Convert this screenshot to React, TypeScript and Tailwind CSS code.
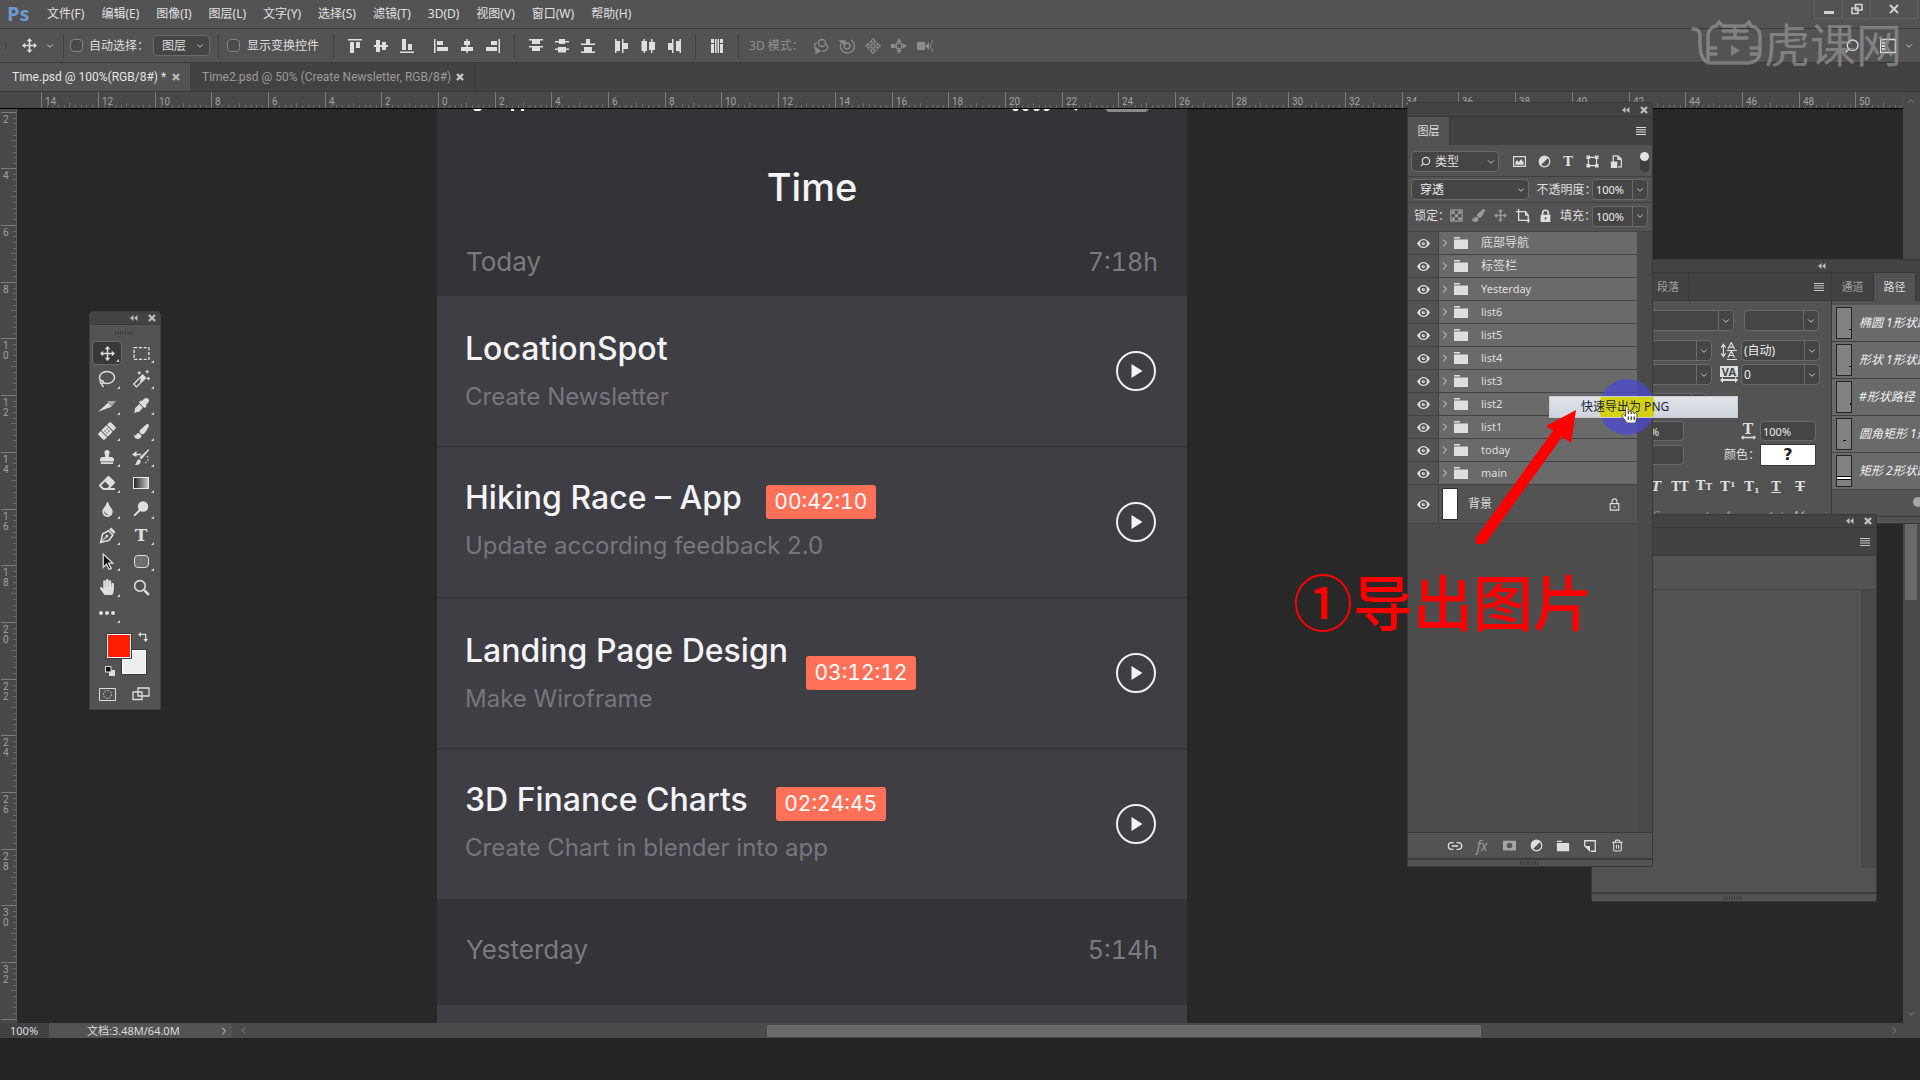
import type { ReactNode } from 'react';
import { ChevronDown, ChevronLeft, ChevronRight, ChevronUp, Lasso, Link2, Search, Trash2 } from 'lucide-react';
import {
  FaBandAid,
  FaEraser,
  FaEyeDropper,
  FaHandPaper,
  FaHandPointer,
  FaPaintBrush,
  FaStamp,
  FaTint,
} from 'react-icons/fa';

const MENUS = ['文件(F)', '编辑(E)', '图像(I)', '图层(L)', '文字(Y)', '选择(S)', '滤镜(T)', '3D(D)', '视图(V)', '窗口(W)', '帮助(H)'];

const LAYERS = ['底部导航', '标签栏', 'Yesterday', 'list6', 'list5', 'list4', 'list3', 'list2', 'list1', 'today', 'main'];

const PATHS = [
  { name: '椭圆 1形状路径', mark: 'right-0 top-[21px] h-px w-0.5 bg-black' },
  { name: '形状 1形状路径', mark: 'right-0 top-[21px] h-px w-0.5 bg-black' },
  { name: '#形状路径', mark: 'right-0 top-[21px] h-0.5 w-px bg-black' },
  { name: '圆角矩形 1形状路径', mark: 'right-[5px] top-[21px] h-px w-[3px] bg-black' },
  { name: '矩形 2形状路径', mark: 'left-0 top-5 h-1 w-full border-y border-black bg-white' },
];

interface Task {
  title: string;
  note: string;
  timer?: string;
  pad: string;
  badge?: string;
}

const TASKS: Task[] = [
  { title: 'LocationSpot', note: 'Create Newsletter', pad: 'pt-8' },
  { title: 'Hiking Race – App', note: 'Update according feedback 2.0', timer: '00:42:10', pad: 'pt-[30px]', badge: 'ml-6 mt-2' },
  { title: 'Landing Page Design', note: 'Make Wiroframe', timer: '03:12:12', pad: 'pt-8', badge: 'ml-[18px] mt-[26px]' },
  { title: '3D Finance Charts', note: 'Create Chart in blender into app', timer: '02:24:45', pad: 'pt-[30px]', badge: 'ml-7 mt-2' },
];

// two centimetres at 72 dpi
const RULER_STEP = 56.693;

/* ---------- small drawings ---------- */

function Glyph({ size = 16, box = 16, className = '', children }: { size?: number; box?: number; className?: string; children: ReactNode }) {
  return (
    <svg width={size} height={size} viewBox={`0 0 ${box} ${box}`} className={`shrink-0 ${className}`} fill="currentColor" aria-hidden="true">
      {children}
    </svg>
  );
}

const MoveShape = (
  <path d="M8 0l3 3.4H8.8v3.8h3.8V5L16 8l-3.4 3V8.8H8.8v3.8H11L8 16l-3-3.4h2.2V8.8H3.4V11L0 8l3.4-3v2.2h3.8V3.4H5z" />
);

const AdjustShape = (
  <>
    <circle cx="8" cy="8" r="6.5" fill="none" stroke="currentColor" strokeWidth="1.5" />
    <path d="M3.4 12.6A6.5 6.5 0 0 1 12.6 3.4z" />
  </>
);

const FolderShape = <path d="M1 2h6v1.5H1zM1 4.5h14V14H1z" />;

function CloseMark() {
  return (
    <Glyph size={8} box={8}>
      <path d="M1 1l6 6M7 1L1 7" stroke="currentColor" strokeWidth="2.400" />
    </Glyph>
  );
}

function CollapseMark() {
  return (
    <Glyph size={8} box={8}>
      <path d="M3.500 1v6L0 4zM7.500 1v6L4 4z" />
    </Glyph>
  );
}

function MenuLines() {
  return (
    <Glyph size={10} box={10}>
      <path d="M0 1h10v1H0zM0 3.300h10v1H0zM0 5.600h10v1H0zM0 8h10v1H0z" />
    </Glyph>
  );
}

function Grip({ className = '' }: { className?: string }) {
  return (
    <svg width="20" height="4" viewBox="0 0 20 4" className={`text-[#3a3a3a] ${className}`} aria-hidden="true">
      <path d="M0.5 0v4M3 0v4M5.500 0v4M8 0v4M10.500 0v4M13 0v4M15.500 0v4M18 0v4" stroke="currentColor" />
    </svg>
  );
}

/* ---------- menu bar, options bar, tabs ---------- */

function MenuBar() {
  return (
    <header className="flex h-[29px] shrink-0 items-center border-b border-[#3a3a3a] pl-[7px]">
      <span className="w-[34px] font-['Open_Sans'] text-[20px] font-bold leading-6 text-[#6d9ad0]">Ps</span>
      <nav className="flex grow gap-[17px] pl-1.5">
        {MENUS.map((menu) => (
          <button key={menu} className="whitespace-nowrap">{menu}</button>
        ))}
      </nav>
      <div className="mb-2.5 mr-0.5 flex h-[19px] border border-t-0 border-[#616161] text-[#d0d0d0]">
        <button aria-label="Minimize" className="flex w-7 items-end justify-center border-r border-[#616161] pb-1">
          <span className="h-[3px] w-2.5 bg-current" />
        </button>
        <button aria-label="Restore" className="flex w-7 items-center justify-center border-r border-[#616161]">
          <Glyph size={12} box={12}>
            <path d="M4.500 1.500h6.500v5.500h-6.500zM1 5h6v5.500H1z" fill="none" stroke="currentColor" strokeWidth="1.600" />
          </Glyph>
        </button>
        <button aria-label="Close" className="flex w-[46px] items-center justify-center">
          <Glyph size={10} box={10}>
            <path d="M1 1l8 8M9 1L1 9" stroke="currentColor" strokeWidth="2" />
          </Glyph>
        </button>
      </div>
    </header>
  );
}

function ToolGlyph({ label, d, className = '' }: { label: string; d: string; className?: string }) {
  return (
    <button aria-label={label} className={`flex w-[26px] justify-center ${className}`}>
      <Glyph size={14} box={14}>
        <path d={d} />
      </Glyph>
    </button>
  );
}

function Divider() {
  return <span className="h-6 w-px shrink-0 bg-[#414141]" />;
}

function OptionsBar() {
  return (
    <div className="flex h-[34px] shrink-0 items-center border-b border-[#3a3a3a] text-[#dedede]">
      <Grip className="ml-0.5 w-2 rotate-90" />
      <button aria-label="Move tool" className="ml-3 flex w-[41px] items-center gap-2">
        <Glyph size={15}>{MoveShape}</Glyph>
        <ChevronDown size={10} />
      </button>
      <Divider />
      <label className="ml-1.5 flex items-center gap-1.5">
        <input type="checkbox" className="size-[13px] appearance-none rounded-sm border border-[#858585] bg-[#4a4a4a]" />
        自动选择：
      </label>
      <div className="ml-1 flex h-[21px] w-[57px] items-center rounded-sm border border-[#6a6a6a] bg-[#454545] pl-2 pr-1">
        <select aria-label="自动选择" className="min-w-0 grow appearance-none bg-transparent">
          <option>图层</option>
        </select>
        <ChevronDown size={10} />
      </div>
      <span className="w-2" />
      <Divider />
      <label className="ml-2 mr-[14px] flex items-center gap-[7px]">
        <input type="checkbox" className="size-[13px] appearance-none rounded-sm border border-[#858585] bg-[#4a4a4a]" />
        显示变换控件
      </label>
      <Divider />
      <div className="ml-2 mr-2 flex">
        <ToolGlyph label="Align top" d="M0 0h14v1.500H0zM2 3h4v11H2zM8 3h4v6H8z" />
        <ToolGlyph label="Align middle" d="M2 1h4v5h2V3h4v3h2v2h-2v3H8V8H6v5H2V8H0V6h2z" />
        <ToolGlyph label="Align bottom" d="M0 12.500h14V14H0zM2 0h4v11H2zM8 5h4v6H8z" />
      </div>
      <div className="mr-2 flex">
        <ToolGlyph label="Align left" d="M0 0h1.500v14H0zM3 2h6v4H3zM3 8h11v4H3z" />
        <ToolGlyph label="Align centre" d="M6.300 0h1.500v2H10v4H7.800v2H13v4H7.800v2H6.300v-2H1V8h5.300V6H4V2h2.300z" />
        <ToolGlyph label="Align right" d="M12.500 0H14v14h-1.500zM5 2h6v4H5zM0 8h11v4H0z" />
      </div>
      <Divider />
      <div className="ml-2 mr-2 flex">
        <ToolGlyph label="Distribute top" d="M0 0h14v1.500h-3V5H3V1.500H0zM0 7h14v1.500h-3V12H3V8.500H0z" />
        <ToolGlyph label="Distribute middle" d="M4 0h6v2h4v1.500h-4V5H4V3.500H0V2h4zM3 8h8v1.500h3V11h-3v2.500H3V11H0V9.500h3z" />
        <ToolGlyph label="Distribute bottom" d="M5 0h4v4.500h5V6H0V4.500h5zM3 8h8v4.500h3V14H0v-1.500h3z" />
      </div>
      <div className="mr-2 flex">
        <ToolGlyph label="Distribute left" d="M0 0h1.500v2H5v10H1.500v2H0zM7 0h1.500v4H13v6H8.500v4H7z" />
        <ToolGlyph label="Distribute centre" d="M2.500 0H4v2h2v10H4v2H2.500v-2h-2V2h2zM10 0h1.500v3H14v8h-2.500v3H10v-3H8V3h2z" />
        <ToolGlyph label="Distribute right" d="M5 0h1.500v14H5v-3H1V4h4zM12.500 0H14v14h-1.500v-2H9V2h3.500z" />
      </div>
      <Divider />
      <ToolGlyph label="Auto align" className="mx-2" d="M1 0h3v4H1zM1 5h3v9H1zM5 0h1.500v14H5zM7.500 0H9v14H7.500zM10 0h3v4h-3zM10 5h3v9h-3z" />
      <Divider />
      <span className="ml-2.5 text-[#909090]">3D 模式：</span>
      <div className="ml-1 flex text-[#8c8c8c]">
        {[
          <g key="orbit" fill="none" stroke="currentColor" strokeWidth="1.300"><circle cx="9" cy="5" r="3.500" /><path d="M4 4C0 7 1 12 5 11M12 5c5 3 2 9-3 8" /><path d="M3 10l4 3-4 2z" fill="currentColor" /></g>,
          <g key="roll" fill="none" stroke="currentColor" strokeWidth="1.300"><circle cx="8" cy="8" r="3" /><path d="M4 2.500A7 7 0 1 0 12 2" /><path d="M1 3h5v3z" fill="currentColor" /></g>,
          <g key="pan" fill="none" stroke="currentColor" strokeWidth="1.100"><path d="M8 .7l2.700 3H9v3.300h3.300V5.300l3 2.700-3 2.700V9H9v3.300h1.700L8 15.300l-2.700-3H7V9H3.700v1.700L.7 8l3-2.700V7H7V3.700H5.300z" /></g>,
          <g key="slide"><circle cx="8" cy="8" r="3" fill="none" stroke="currentColor" strokeWidth="1.500" /><path d="M8 0l2.500 4h-5zM8 16l2.500-4h-5zM0 6h4v4H0zM16 8l-4-2.500v5z" /></g>,
          <g key="zoom"><path d="M0 4h8v8H0zM8 8l4-4v8z" /><path d="M16 2l-3 6 3 6" fill="none" stroke="currentColor" /></g>,
        ].map((shape) => (
          <button key={shape.key} aria-label={`3D ${shape.key}`} className="flex w-[26px] justify-center">
            <Glyph>{shape}</Glyph>
          </button>
        ))}
      </div>
      <div className="ml-auto mr-1.5 flex items-center gap-2">
        <button aria-label="Search"><Search size={16} className="-scale-x-100" /></button>
        <button aria-label="Workspace" className="ml-3">
          <Glyph>
            <path d="M0.500 1.500h15v13h-15z" fill="none" stroke="currentColor" strokeWidth="1.500" />
            <path d="M2 4h3v2H2zM2 7h3v2H2zM2 10h3v2H2z" />
          </Glyph>
        </button>
        <ChevronDown size={10} />
      </div>
    </div>
  );
}

function DocumentTabs() {
  return (
    <div className="flex h-[29px] shrink-0 items-stretch whitespace-nowrap border-b border-[#383838] bg-[#424242] font-[Roboto] text-[#9b9b9b]">
      <div className="flex w-[190px] items-center justify-between bg-[#535353] pl-3 pr-2.5 text-[#e4e4e4]">
        <button>Time.psd @ 100%(RGB/8#) *</button>
        <button aria-label="Close Time.psd" className="text-[#b8b8b8]"><CloseMark /></button>
      </div>
      <div className="flex w-[285px] items-center justify-between border-r border-[#383838] pl-3 pr-2.5">
        <button>Time2.psd @ 50% (Create Newsletter, RGB/8#)</button>
        <button aria-label="Close Time2.psd" className="text-[#c8c8c8]"><CloseMark /></button>
      </div>
    </div>
  );
}

/* ---------- rulers ---------- */

function TopRuler() {
  const zero = 438;
  const marks = Array.from({ length: 33 }, (_, i) => i - 7);
  return (
    <svg height="16" className="block w-full" aria-label="Horizontal ruler" fill="#a2a2a2" fontSize="10" fontFamily="Roboto">
      {marks.map((m) => {
        const x = Math.round(zero + m * RULER_STEP);
        return (
          <g key={m}>
            <rect x={x} y="0" width="1" height="17" fill="#7c7c7c" />
            {Array.from({ length: 9 }, (_, k) => (
              <rect key={k} x={Math.round(x + ((k + 1) * RULER_STEP) / 10)} y={k === 4 ? 11 : 13} width="1" height="6" fill="#6b6b6b" />
            ))}
            <text x={x + 4} y="13">{Math.abs(m * 2)}</text>
          </g>
        );
      })}
    </svg>
  );
}

function LeftRuler() {
  const zero = -54;
  return (
    <svg width="17" className="h-full shrink-0 border-r border-[#5e5e5e] bg-[#484848]" aria-label="Vertical ruler" fill="#a2a2a2" fontSize="10" fontFamily="Roboto">
      {Array.from({ length: 17 }, (_, i) => i + 1).map((m) => {
        const y = Math.round(zero + m * RULER_STEP);
        return (
          <g key={m}>
            <rect x="1" y={y} width="16" height="1" fill="#7c7c7c" />
            {Array.from({ length: 9 }, (_, k) => (
              <rect key={k} x={k === 4 ? 11 : 13} y={Math.round(y + ((k + 1) * RULER_STEP) / 10)} width="6" height="1" fill="#6b6b6b" />
            ))}
            {/* the last mark has no room for its number */}
            {m < 17 && String(m * 2).split('').map((digit, k) => (
              <text key={k} x="3" y={y + 11 + k * 10}>{digit}</text>
            ))}
          </g>
        );
      })}
    </svg>
  );
}

/* ---------- artboard ---------- */

function TaskRow({ task }: { task: Task }) {
  return (
    <li className="flex h-[151px] items-center justify-between border-b border-[#343339] pr-[31px]">
      <div className={`h-full pl-7 ${task.pad}`}>
        <div className="flex h-[46px] items-start">
          <h2 className="whitespace-nowrap text-[32px] font-medium leading-[42px] text-[#f4f3f6]">{task.title}</h2>
          {task.timer && (
            <span className={`flex h-[34px] w-[110px] shrink-0 items-center justify-center rounded-[3px] bg-[#ff7058] text-[21px] tabular-nums text-white ${task.badge}`}>
              {task.timer}
            </span>
          )}
        </div>
        <p className="whitespace-nowrap text-[24px] leading-[46px] text-[#77767c]">{task.note}</p>
      </div>
      <button aria-label={`Start ${task.title}`} className="flex size-10 items-center justify-center rounded-full border-2 border-[#f0eff2] text-[#f4f3f6]">
        <Glyph size={16}>
          <path d="M3.500 1l11 7-11 7z" />
        </Glyph>
      </button>
    </li>
  );
}

function DayHeading({ day, total, className }: { day: string; total: string; className: string }) {
  return (
    <div className={`flex items-center justify-between bg-[#343338] pl-[29px] pr-[29px] text-[26px] text-[#7b7a7f] ${className}`}>
      <span>{day}</span>
      <span className="text-[25px] tabular-nums">{total}</span>
    </div>
  );
}

function Artboard() {
  return (
    <main className="ml-[420px] w-[750px] shrink-0 bg-[#3f3e45] font-[Inter]">
      <div className="h-28 bg-[#343338]">
        <svg width="750" height="3" viewBox="0 0 750 3" fill="#f4f3f6" className="block" aria-hidden="true">
          <path d="M36 0h9l-2 2h-5zM74 0h3v2h-3zM84 0h3v2h-3zM575 0h7l-2 2h-3zM585 0h7l-2 2h-3zM596 0h7l-2 2h-3zM606 0h7l-2 2h-3zM637 0h4l-2 2z" />
          <path d="M668 0h44l-3 3h-38z" fill="#8a898d" />
        </svg>
        <h1 className="pt-[52px] text-center text-[38px] font-medium leading-[46px] text-[#f4f3f6]">Time</h1>
      </div>
      <DayHeading day="Today" total="7:18h" className="h-[75px] pt-1.5" />
      <ul>
        {TASKS.map((task) => (
          <TaskRow key={task.title} task={task} />
        ))}
      </ul>
      <DayHeading day="Yesterday" total="5:14h" className="h-[105px] pb-1.5" />
    </main>
  );
}

/* ---------- status bar and scroll bars ---------- */

function StatusBar() {
  return (
    <footer className="flex h-[15px] shrink-0 items-center bg-[#4a4a4a] text-[11px] leading-[15px] text-[#dcdcdc]">
      <input aria-label="Zoom" defaultValue="100%" className="w-[49px] bg-[#424242] pl-2.5" />
      <div className="flex w-[183px] items-center justify-between bg-[#535353] pl-[38px] pr-0.5">
        文档:3.48M/64.0M
        <ChevronRight size={12} />
      </div>
      <ChevronLeft size={11} className="ml-1.5 shrink-0 text-[#8c8c8c]" />
      <div className="flex h-3 grow pl-[518px]">
        <div className="w-[714px] bg-[#6a6a6a]" />
      </div>
      <ChevronRight size={11} className="mr-5 text-[#8c8c8c]" />
    </footer>
  );
}

function VerticalScroll() {
  return (
    <div className="flex w-[17px] shrink-0 flex-col items-center bg-[#4a4a4a] pr-0.5 text-[#8c8c8c]">
      <div className="mt-[414px] h-[77px] w-3 bg-[#6a6a6a]" />
      <ChevronDown size={10} className="mb-1 mt-auto" />
    </div>
  );
}

/* ---------- floating panels ---------- */

function Swatches() {
  return (
    <div className="relative h-[61px]">
      <button aria-label="Background colour" className="absolute left-[31px] top-[23px] size-[26px] border border-[#3a3a3a] bg-[#efeff0] shadow-[inset_0_0_0_1px_#fff]" />
      <button aria-label="Foreground colour" className="absolute left-4 top-[7px] size-[26px] border border-[#3a3a3a] bg-[#ff1e00] shadow-[inset_0_0_0_1px_#fff]" />
      <Glyph size={11} box={11} className="absolute left-12 top-1.5">
        <path d="M3 0v1.700h5.300V7H10L7.700 10 5.300 7H7V3H3v2L0 2.500z" />
      </Glyph>
      <Glyph size={10} box={10} className="absolute left-[15px] top-10">
        <path d="M4 4h6v6H4z" />
        <path d="M0.500 0.500h5.500v5.500H0.500z" fill="#111" stroke="#ddd" />
      </Glyph>
    </div>
  );
}

const TOOLS: { name: string; icon: ReactNode }[] = [
  { name: 'Move', icon: <Glyph size={15}>{MoveShape}</Glyph> },
  { name: 'Marquee', icon: <Glyph size={17}><path d="M1 2.500h14v11H1z" fill="none" stroke="currentColor" strokeWidth="1.300" strokeDasharray="3 1.500" /></Glyph> },
  { name: 'Lasso', icon: <Lasso size={18} strokeWidth={2} /> },
  { name: 'Magic wand', icon: <Glyph size={18}><path d="M1.500 12.500l8-8 2.500 2.500-8 8z" fill="none" stroke="currentColor" strokeWidth="1.200" /><path d="M8 6l1.500-1.500L12 7l-5 5zM6 1h1v3H6zM5 2h3v1H5zM13 0h1v3h-1zM12 1h3v1h-3zM14 6h1v3h-1zM13 7h3v1h-3z" /></Glyph> },
  { name: 'Slice', icon: <Glyph size={18}><path d="M0 14l9-8 3 3.500z" /><path d="M8 4.500h8l-4 5z" opacity="0.600" /></Glyph> },
  { name: 'Eyedropper', icon: <FaEyeDropper size={15} /> },
  { name: 'Healing brush', icon: <FaBandAid size={18} className="-rotate-45" /> },
  { name: 'Brush', icon: <FaPaintBrush size={15} /> },
  { name: 'Clone stamp', icon: <FaStamp size={14} /> },
  { name: 'History brush', icon: <Glyph size={18}><path d="M15.500 1.500L8.500 10l-2-1.500 8-7.500zM7.800 11c0 3-2 4.500-5.300 4 1.500-.7 1-3.500 3.500-5.300zM0 6l4-3.500V5h4v1.500H4V8z" /><path d="M13.500 7c2 3 0 6-3 7" fill="none" stroke="currentColor" strokeDasharray="1.500 1.500" /></Glyph> },
  { name: 'Eraser', icon: <FaEraser size={16} /> },
  { name: 'Gradient', icon: <span className="h-3 w-4 border border-[#e6e6e6] bg-linear-to-r from-[#2c2c2c] to-[#c8c8c8]" /> },
  { name: 'Blur', icon: <FaTint size={15} /> },
  { name: 'Dodge', icon: <Glyph size={16}><circle cx="10" cy="5.500" r="5.200" /><path d="M6.500 8L0.500 14l1.200 1.500L8 9.500z" /></Glyph> },
  { name: 'Pen', icon: <Glyph size={17}><path d="M1.500 14.500l2-8L9 3.500l4 4-3.500 5z" fill="none" stroke="currentColor" strokeWidth="1.500" /><path d="M1.500 14.500L7 9" stroke="currentColor" /><circle cx="7.500" cy="8.500" r="1.300" /><path d="M9.500 2l2-1.500 4 4-1.500 2z" /></Glyph> },
  { name: 'Type', icon: <span className="font-['DejaVu_Serif'] text-[17px] leading-5 font-bold">T</span> },
  { name: 'Path selection', icon: <Glyph size={17}><path d="M4 1v12.500l3-3 2.500 5 2-1-2.500-5h4z" fill="#111" stroke="currentColor" strokeWidth="1.200" /></Glyph> },
  { name: 'Rounded rectangle', icon: <span className="h-[13px] w-[15px] rounded-[4px] border border-[#dedede] bg-[#6e6e6e]" /> },
  { name: 'Hand', icon: <FaHandPaper size={16} /> },
  { name: 'Zoom', icon: <Glyph size={17}><circle cx="6.500" cy="6.500" r="5" fill="none" stroke="currentColor" strokeWidth="1.500" /><path d="M10.500 10.500l4.500 4.500" stroke="currentColor" strokeWidth="2.400" /></Glyph> },
  { name: 'More', icon: <Glyph><circle cx="2" cy="8" r="2" /><circle cx="8" cy="8" r="2" /><circle cx="14" cy="8" r="2" /></Glyph> },
];

function Toolbox() {
  return (
    <aside aria-label="Tools" className="absolute left-[89px] top-[311px] w-[72px] rounded-t border border-[#3f3f3f] bg-[#535353] pb-2 text-[#dedede]">
      <div className="flex h-3 items-center justify-end gap-2.5 rounded-t bg-[#434343] pr-1 text-[#bcbcbc]">
        <CollapseMark />
        <CloseMark />
      </div>
      <div className="flex h-4 items-center justify-center border-t border-[#3a3a3a]"><Grip /></div>
      <div className="grid grid-cols-[34px_34px] auto-rows-[26px]">
        {TOOLS.map((tool, i) => (
          <button
            key={tool.name}
            aria-label={tool.name}
            className={`relative mx-0.5 my-px flex items-center justify-center ${i === 0 ? 'rounded-sm border border-[#6a6a6a] bg-[#383838]' : ''}`}
          >
            {tool.icon}
            {tool.name !== 'Zoom' && (
              <svg width="3" height="3" viewBox="0 0 3 3" className="absolute bottom-0.5 right-0.5" aria-hidden="true">
                <path d="M3 0v3H0z" fill="#d0d0d0" />
              </svg>
            )}
          </button>
        ))}
      </div>
      <Swatches />
      <div className="flex items-center gap-4 pl-[9px]">
        <button aria-label="Quick mask">
          <svg width="17" height="13" viewBox="0 0 17 13" fill="none" stroke="currentColor" aria-hidden="true">
            <path d="M0.500 0.500h16v12H0.500z" />
            <circle cx="8.500" cy="6.500" r="4" strokeDasharray="1.500 1.500" />
          </svg>
        </button>
        <button aria-label="Screen mode">
          <svg width="18" height="14" viewBox="0 0 18 14" fill="#535353" stroke="currentColor" strokeWidth="1.300" aria-hidden="true">
            <path d="M6 1h11v8H6zM1 5h9v7.500H1z" />
          </svg>
        </button>
      </div>
    </aside>
  );
}

function Field({ label, value, className }: { label: string; value: string; className: string }) {
  return <input aria-label={label} defaultValue={value} className={`min-w-0 rounded-sm border border-[#6a6a6a] bg-[#454545] pl-0.5 text-[11px] text-[#ececec] ${className}`} />;
}

function Dropdown({ label, value, className, split = true }: { label: string; value: string; className: string; split?: boolean }) {
  return (
    <div className={`flex h-[21px] items-center rounded-sm border border-[#6a6a6a] bg-[#454545] ${className}`}>
      <select aria-label={label} className="h-full min-w-0 grow appearance-none bg-transparent pl-0.5 text-[#ececec]">
        <option>{value}</option>
      </select>
      <span className={`flex h-full w-[15px] shrink-0 items-center justify-center ${split ? 'border-l border-[#6a6a6a]' : ''}`}>
        <ChevronDown size={10} />
      </span>
    </div>
  );
}

function PercentField({ label }: { label: string }) {
  return (
    <div className="flex h-[21px] w-14 items-center rounded-sm border border-[#6a6a6a] bg-[#454545]">
      <input aria-label={label} defaultValue="100%" className="h-full w-[39px] bg-transparent pl-[3px] text-[11px] text-[#ececec]" />
      <span className="flex h-full grow items-center justify-center border-l border-[#6a6a6a]"><ChevronDown size={10} /></span>
    </div>
  );
}

function EyeIcon() {
  return (
    <svg width="13" height="9" viewBox="0 0 13 9" aria-hidden="true">
      <path d="M0 4.500C2 1.500 4 0 6.500 0S11 1.500 13 4.500C11 7.500 9 9 6.500 9S2 7.500 0 4.500z" fill="#dedede" />
      <circle cx="6.500" cy="4.500" r="3.300" fill="#4a4a4a" />
      <circle cx="6.500" cy="4.500" r="1.800" fill="#dedede" />
      <circle cx="7" cy="4" r="0.800" fill="#4a4a4a" />
    </svg>
  );
}

function LayersPanel() {
  return (
    <section aria-label="图层" className="absolute right-[267px] top-[102px] flex h-[765px] w-[246px] flex-col rounded-t border border-[#383838] bg-[#535353] text-[#dedede]">
      <div className="flex h-[14px] shrink-0 items-center justify-end gap-2.5 border-b border-[#383838] bg-[#434343] pr-1 text-[#bcbcbc]">
        <CollapseMark />
        <CloseMark />
      </div>
      <div className="flex h-7 shrink-0 items-center justify-between bg-[#424242] pr-1.5">
        <button className="h-full w-[42px] border-r border-[#383838] bg-[#535353] text-[11px]">图层</button>
        <MenuLines />
      </div>
      <div className="flex h-8 shrink-0 items-center border-b border-[#404040] px-[3px] pt-0.5">
        <div className="flex h-[21px] w-[88px] items-center rounded-sm border border-[#6a6a6a] bg-[#454545] pl-2 pr-0.5">
          <Search size={11} strokeWidth={2.500} className="-scale-x-100" />
          <select aria-label="类型" className="min-w-0 grow appearance-none bg-transparent pl-1">
            <option>类型</option>
          </select>
          <ChevronDown size={10} />
        </div>
        <div className="ml-2 flex grow items-center">
          <button aria-label="Pixel layers" className="flex w-[25px] justify-center">
            <Glyph size={13}><path d="M0.700 2h14.600v12H0.700z" fill="none" stroke="currentColor" strokeWidth="1.400" /><path d="M3 12V9l2-3 2 3 3-4 3 4v3z" /></Glyph>
          </button>
          <button aria-label="Adjustment layers" className="flex w-6 justify-center"><Glyph size={13}>{AdjustShape}</Glyph></button>
          <button aria-label="Type layers" className="w-6 font-['DejaVu_Serif'] text-[13px] font-bold leading-4">T</button>
          <button aria-label="Shape layers" className="flex w-6 justify-center">
            <Glyph size={13}><path d="M3 3h10v10H3z" fill="none" stroke="currentColor" strokeWidth="1.400" /><path d="M0.500 0.500h4.500v4.500H0.500zM11 0.500h4.500v4.500H11zM0.500 11h4.500v4.500H0.500zM11 11h4.500v4.500H11zM2 2v1.500h1.500V2zM12.500 2v1.500H14V2z" fillRule="evenodd" /></Glyph>
          </button>
          <button aria-label="Smart objects" className="flex w-6 justify-center">
            <Glyph size={13}><path d="M4 8V1h6l4 4v9.500h-4" fill="none" stroke="currentColor" strokeWidth="1.500" /><path d="M9 1v5h5zM1 8h8v8H1z" /></Glyph>
          </button>
        </div>
        <button aria-label="Toggle filter" className="flex h-5 w-[9px] rounded-full bg-[#3f3f3f]">
          <span className="size-[9px] rounded-full bg-[#e4e4e4]" />
        </button>
      </div>
      <div className="flex h-[26px] shrink-0 items-center justify-between border-b border-[#404040] pl-[3px] pr-1">
        <Dropdown label="混合模式" value=" 穿透" split={false} className="w-[118px] pl-1.5" />
        <span className="-mr-3">不透明度：</span>
        <PercentField label="不透明度" />
      </div>
      <div className="flex h-7 shrink-0 items-center justify-between pb-0.5 pl-1.5 pr-1">
        <span className="-mr-2">锁定：</span>
        <div className="flex gap-[9px]">
          <Glyph size={13} className="text-[#9a9a9a]"><path d="M1 1h14v14H1z" fill="none" stroke="currentColor" strokeWidth="1.500" /><path d="M2 2h4v4H2zM10 2h4v4h-4zM6 6h4v4H6zM2 10h4v4H2zM10 10h4v4h-4z" /></Glyph>
          <FaPaintBrush size={13} className="text-[#9a9a9a]" />
          <Glyph size={13} className="text-[#9a9a9a]">{MoveShape}</Glyph>
          <Glyph size={14}><path d="M0 3h11l3 4v9M3 0v13h13M11 3v4h3" fill="none" stroke="currentColor" strokeWidth="1.500" /></Glyph>
          <Glyph size={13}><path d="M4.500 8V5a3.500 3.500 0 0 1 7 0v3" fill="none" stroke="currentColor" strokeWidth="2" /><path d="M2 7h12v9H2zM7 10v3h2v-3z" fillRule="evenodd" /></Glyph>
        </div>
        <span className="-mr-3">填充：</span>
        <PercentField label="填充" />
      </div>
      <div className="flex grow border-t border-[#454545] bg-[#4d4d4d]">
        <ul className="grow">
          {LAYERS.map((layer) => (
            <li key={layer} className="flex h-[23px] border-b border-[#434343] bg-[#6a6a6a]">
              <button aria-label={`Show ${layer}`} className="flex w-[31px] items-center justify-center border-r border-[#434343] bg-[#535353]"><EyeIcon /></button>
              <button className={`flex items-center ${/^[a-z]/i.test(layer) ? 'text-[11px]' : 'text-[12px]'}`}>
                <ChevronRight size={12} />
                <Glyph size={16} className="ml-0.5 mr-3">{FolderShape}</Glyph>
                {layer}
              </button>
            </li>
          ))}
          <li className="flex h-[39px] items-center border-b border-[#434343] bg-[#535353]">
            <button aria-label="Show 背景" className="flex h-full w-[31px] items-center justify-center border-r border-[#434343]"><EyeIcon /></button>
            <span className="ml-[3px] h-8 w-4 border border-[#2e2e2e] bg-white" />
            <span className="ml-2.5 grow">背景</span>
            <Glyph size={13} className="mr-4"><path d="M2.700 7h10.600v8H2.700zM5 7V4a3 3 0 0 1 6 0v3" fill="none" stroke="currentColor" strokeWidth="1.400" /><path d="M7 10h2v2H7z" /></Glyph>
          </li>
        </ul>
        <div className="w-[15px] bg-[#4a4a4a]" />
      </div>
      <div className="flex h-[26px] shrink-0 items-center justify-center border-t border-[#3a3a3a] pl-3">
        <button aria-label="Link layers" className="flex w-[27px] justify-center"><Link2 size={16} /></button>
        <button className="w-[27px] text-[14px] italic leading-4 text-[#9a9a9a]">fx</button>
        <button aria-label="Add mask" className="flex w-[27px] justify-center text-[#a6a6a6]"><Glyph size={13}><path d="M0 2h16v12H0zM8 4.500a3.500 3.500 0 1 0 .01 0z" fillRule="evenodd" /></Glyph></button>
        <button aria-label="Adjustment" className="flex w-[27px] justify-center"><Glyph size={13}>{AdjustShape}</Glyph></button>
        <button aria-label="New group" className="flex w-[27px] justify-center"><Glyph size={14}>{FolderShape}</Glyph></button>
        <button aria-label="New layer" className="flex w-[27px] justify-center"><Glyph size={12}><path d="M1 8V1h14v14H9" fill="none" stroke="currentColor" strokeWidth="1.800" /><path d="M0 8h8v8z" /></Glyph></button>
        <button aria-label="Delete layer" className="flex w-[27px] justify-center"><Trash2 size={13} /></button>
      </div>
      <div className="flex h-2 shrink-0 items-center justify-center border-t-2 border-[#3a3a3a]"><Grip /></div>
    </section>
  );
}

function CharacterPanel() {
  return (
    <section aria-label="字符" className="w-[272px] shrink-0 border-r border-[#383838]">
      <div className="flex h-7 items-center border-b border-[#383838] bg-[#424242] pl-[97px] text-[11px] text-[#a0a0a0]">
        <button>段落</button>
        <span className="ml-[9px] h-full w-px bg-[#383838]" />
        <span className="ml-auto mr-[7px] text-[#c4c4c4]"><MenuLines /></span>
      </div>
      <div className="flex justify-end gap-2.5 pr-3 pt-[9px]">
        <Dropdown label="字体" value="" className="w-[150px]" />
        <Dropdown label="字形" value="" className="w-[75px]" />
      </div>
      <div className="mt-[9px] flex items-center justify-end pr-[11px]">
        <Dropdown label="字号" value="" className="w-[140px]" />
        <Glyph size={18} className="ml-2 mr-[3px]"><path d="M3 3v9M1 5l2-3 2 3M1 10l2 3 2-3M7 6.500L10 .500l3 6M8 4.500h4M7 14l3-6 3 6M8 12h4M6 15.500h9M6 7.500h9" fill="none" stroke="currentColor" /></Glyph>
        <Dropdown label="行距" value="(自动)" className="w-[79px]" />
      </div>
      <div className="mt-[3px] flex items-center justify-end pr-[11px]">
        <Dropdown label="字偶间距" value="" className="w-[140px]" />
        <span className="ml-2 mr-[3px] flex w-[18px] flex-col items-center bg-[#535353]">
          <span className="w-full bg-[#dedede] text-center text-[11px] font-bold leading-[11px] text-[#444]">VA</span>
          <svg width="18" height="6" viewBox="0 0 18 6" aria-hidden="true"><path d="M0 3l3-3v2h12V0l3 3-3 3V4H3v2z" fill="currentColor" /></svg>
        </span>
        <Dropdown label="字距" value="0" className="w-[79px]" />
      </div>
      <div className="mt-2 flex justify-end pr-[124px]">
        <Dropdown label="比例间距" value="" className="w-[100px]" />
      </div>
      <div className="mt-[7px] flex items-center pl-[68px] pr-[15px]">
        <Field label="垂直缩放" value="100%" className="h-5 w-14" />
        <span className="ml-auto mr-[3px] flex w-[18px] flex-col items-center font-['DejaVu_Serif'] text-[14px] font-bold leading-[12px]">
          T
          <svg width="17" height="5" viewBox="0 0 18 6" aria-hidden="true"><path d="M0 3l3-3v2h12V0l3 3-3 3V4H3v2z" fill="currentColor" /></svg>
        </span>
        <Field label="水平缩放" value="100%" className="h-5 w-14" />
      </div>
      <div className="mt-[3px] flex items-center pl-[68px] pr-[15px]">
        <Field label="基线偏移" value="" className="h-5 w-14" />
        <span className="ml-auto">颜色：</span>
        <button className="h-[22px] w-14 border border-[#3a3a3a] bg-white font-['DejaVu_Sans'] text-[16px] font-bold leading-5 text-[#222]">?</button>
      </div>
      <div className="mt-2.5 flex justify-end pr-[19px] font-['DejaVu_Serif'] text-[13px] font-bold leading-5">
        <button className="w-6 italic">T</button>
        <button className="w-6 text-[12px]">TT</button>
        <button className="w-6">T<span className="text-[9px]">T</span></button>
        <button className="w-6">T<sup className="text-[8px]">1</sup></button>
        <button className="w-6">T<sub className="text-[8px]">1</sub></button>
        <button className="w-6 underline">T</button>
        <button className="w-6 line-through">T</button>
      </div>
      <div className="mt-2.5 flex justify-end pr-[19px] font-['DejaVu_Serif'] text-[13px] italic leading-5 text-[#8c8c8c]">
        <button className="w-6">fi</button>
        <button className="w-6 text-[#dedede]">o</button>
        <button className="w-6">st</button>
        <button className="w-6">A</button>
        <button className="w-6">aa</button>
        <button className="w-6 text-[11px]">1st</button>
        <button className="w-6 text-[#dedede]">½</button>
      </div>
    </section>
  );
}

function PathsPanel() {
  return (
    <section aria-label="路径" className="flex min-w-0 grow flex-col overflow-hidden">
      <div className="flex h-7 shrink-0 border-b border-[#383838] bg-[#424242] text-[11px]">
        <button className="w-[42px] shrink-0 border-r border-[#383838] text-[#a0a0a0]">通道</button>
        <button className="-mb-px w-[42px] shrink-0 border-r border-[#383838] bg-[#535353]">路径</button>
      </div>
      <ul className="mt-1">
        {PATHS.map((path) => (
          <li key={path.name} className="flex h-[37px] items-center border-b border-[#434343] bg-[#6a6a6a] pl-1">
            <span className="relative h-8 w-4 shrink-0 border border-[#242424] bg-[#828282]">
              <span className={`absolute ${path.mark}`} />
            </span>
            <span className="ml-[7px] whitespace-nowrap italic text-[#f0f0f0]">{path.name}</span>
          </li>
        ))}
      </ul>
      <div className="flex h-6 items-center pl-[81px]">
        <span className="size-2.5 shrink-0 rounded-full bg-[#a6a6a6]" />
      </div>
    </section>
  );
}

function RightDock() {
  return (
    <div className="absolute right-0 top-[259px] h-[265px] w-[360px] overflow-hidden border-y border-[#383838] bg-[#535353] text-[#dedede]">
      <div className="flex h-[13px] items-center border-b border-[#383838] bg-[#434343] pl-[258px] text-[#bcbcbc]"><CollapseMark /></div>
      <div className="flex h-[243px] overflow-hidden">
        <CharacterPanel />
        <PathsPanel />
      </div>
      <div className="h-2 border-t border-[#383838]" />
    </div>
  );
}

function EmptyPanel() {
  return (
    <section aria-label="历史记录" className="absolute right-[43px] top-[514px] flex h-[388px] w-[286px] flex-col border border-[#383838] bg-[#535353] text-[#c4c4c4]">
      <div className="flex h-[13px] shrink-0 items-center justify-end gap-2.5 border-b border-[#383838] bg-[#434343] pr-1"><CollapseMark /><CloseMark /></div>
      <div className="flex h-7 shrink-0 items-center justify-end border-b border-[#383838] bg-[#424242] pr-1.5"><MenuLines /></div>
      <div className="h-[34px] shrink-0 border-b border-[#404040]" />
      <div className="flex h-[278px] justify-end"><div className="w-[15px] bg-[#4a4a4a]" /></div>
      <div className="mt-auto flex h-[9px] items-center justify-center border-t-2 border-[#3a3a3a]"><Grip /></div>
    </section>
  );
}

/* ---------- overlays ---------- */

function ExportMenu() {
  return (
    <>
      <div className="absolute right-[265px] top-[379px] size-14 rounded-full bg-[#4a4ad2]/75" />
      <div role="menu" className="absolute right-[182px] top-[396px] flex h-[22px] w-[189px] items-center overflow-hidden border border-[#c8cbd2] bg-linear-to-b from-[#e0e3e9] to-[#cfd4de]">
        <span className="absolute -top-[18px] right-[82px] size-14 rounded-full bg-[#d4d212]" />
        <button role="menuitem" className="relative pl-[31px] text-[12px] text-[#23233c]">快速导出为 PNG</button>
      </div>
      <FaHandPointer size={17} className="absolute right-[282px] top-[406px] text-white" stroke="#333" strokeWidth="24" />
    </>
  );
}

function Annotation() {
  return (
    <>
      <svg width="110" height="136" viewBox="0 0 110 136" className="absolute right-[340px] top-[408px]" aria-hidden="true">
        <path d="M11 132L86 28" stroke="#ff0000" strokeWidth="11" strokeLinecap="round" />
        <path d="M106 2L76 18l25 17z" fill="#ff0000" />
      </svg>
      <p className="absolute right-[327px] top-[563px] whitespace-nowrap text-[60px] font-medium leading-[80px] text-[#ff0000]">①导出图片</p>
    </>
  );
}

function Watermark() {
  return (
    <div className="pointer-events-none absolute right-[18px] top-5 flex items-center text-[#a0a0a0] opacity-60">
      <svg width="74" height="48" viewBox="0 0 74 48" fill="none" stroke="currentColor" strokeWidth="3.500" strokeLinecap="round" aria-hidden="true">
        <path d="M3 9c8 0 7 6 7 14 0 12 3 20 12 20h35c9 0 13-5 13-12V16c0-6-4-9-9-10l-2-4-4 4H33l-4-4-3 4c-5 1-8 5-8 10v27M33 11h24M33 18h24M45 9v9M18 28h8M18 34h8M61 28h8M61 34h8" />
        <path d="M41 25v11l9-5.500z" fill="currentColor" stroke="none" />
      </svg>
      <span className="text-[46px] leading-[48px]">虎课网</span>
    </div>
  );
}

export default function App() {
  return (
    <div className="relative flex h-screen flex-col overflow-hidden bg-[#232323] pb-[42px] font-['Noto_Sans','Noto_Sans_CJK_SC',sans-serif] text-[12px] leading-4 text-[#e0e0e0]">
      <div className="flex min-h-0 grow flex-col bg-[#535353]">
        <MenuBar />
        <OptionsBar />
        <DocumentTabs />
        <div className="flex h-[17px] shrink-0 bg-[#484848]">
          <div className="min-w-0 grow border-b border-black"><TopRuler /></div>
          <div className="flex w-[17px] shrink-0 items-center justify-center bg-[#4a4a4a] pr-0.5 text-[#8c8c8c]"><ChevronUp size={10} /></div>
        </div>
        <div className="flex min-h-0 grow">
          <LeftRuler />
          <div className="flex min-w-0 grow overflow-hidden bg-[#282828]">
            <Artboard />
          </div>
          <VerticalScroll />
        </div>
        <StatusBar />
      </div>
      <Toolbox />
      <RightDock />
      <EmptyPanel />
      <LayersPanel />
      <ExportMenu />
      <Annotation />
      <Watermark />
    </div>
  );
}
